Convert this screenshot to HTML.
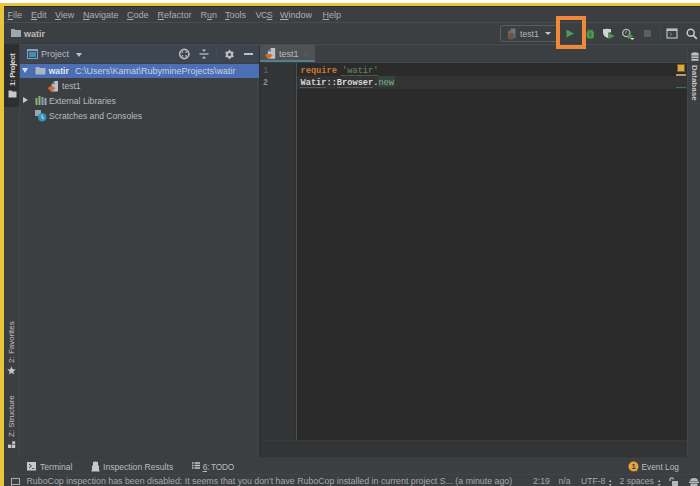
<!DOCTYPE html>
<html><head><meta charset="utf-8">
<style>
*{margin:0;padding:0;box-sizing:border-box}
html,body{width:700px;height:486px;overflow:hidden;background:#fff}
body{position:relative;font-family:"Liberation Sans",sans-serif;color:#bbbbbb}
.a{position:absolute}
.t{position:absolute;white-space:pre;font-size:8.6px;line-height:10px}
.mono{font-family:"Liberation Mono",monospace}
u{text-decoration:underline;text-underline-offset:1px}
</style></head><body>
<!-- yellow frame -->
<div class="a" style="left:0;top:3px;width:700px;height:483px;background:#e9c53c"></div>
<div class="a" style="left:3.5px;top:6px;width:696.5px;height:480px;background:#2e2f2c"></div><div class="a" style="left:4px;top:7px;width:696px;height:479px;background:#3c3f41"></div>

<!-- menu bar -->
<div class="t" style="left:7.5px;top:10px;font-size:9px;color:#adadad"><span style="position:absolute;left:0"><u>F</u>ile</span><span style="position:absolute;left:23.5px"><u>E</u>dit</span><span style="position:absolute;left:47.5px"><u>V</u>iew</span><span style="position:absolute;left:75.5px"><u>N</u>avigate</span><span style="position:absolute;left:119.5px"><u>C</u>ode</span><span style="position:absolute;left:150px"><u>R</u>efactor</span><span style="position:absolute;left:193px">R<u>u</u>n</span><span style="position:absolute;left:217.5px"><u>T</u>ools</span><span style="position:absolute;left:248px;letter-spacing:-0.6px">VC<u>S</u></span><span style="position:absolute;left:272.5px"><u>W</u>indow</span><span style="position:absolute;left:315px"><u>H</u>elp</span></div>
<div class="a" style="left:4px;top:22px;width:696px;height:1px;background:#4a4d4f"></div>

<!-- nav bar -->
<div class="a" style="left:11px;top:30px;width:10px;height:7px;background:#9aa7b0"></div>
<div class="a" style="left:11px;top:29px;width:4px;height:2px;background:#9aa7b0"></div>
<div class="t" style="left:24px;top:28.6px;font-size:9px;font-weight:bold;color:#bbb">watir</div>

<!-- run config combo -->
<div class="a" style="left:500px;top:25px;width:58px;height:17px;border:1px solid #5a5d5f;border-radius:3px"></div>
<svg class="a" style="left:505px;top:28px" width="12" height="12"><path d="M6 0.5 H10.5 V10 H3 V3.5Z" fill="#6f767d"/><path d="M6 0.5 V3.5 H3Z" fill="#4f555b"/><circle cx="6" cy="8" r="3.6" fill="#5a5e62"/><path d="M4 6.5 H8 L9 7.8 L6 11 L3 7.8Z" fill="#8a4a2a"/></svg>
<div class="t" style="left:520px;top:29px;font-size:8.7px;color:#b5b5b5">test1</div>
<div class="a" style="left:544.5px;top:32px;width:0;height:0;border-left:3px solid transparent;border-right:3px solid transparent;border-top:3.5px solid #c8c8c8"></div>


<svg class="a" style="left:566px;top:29px" width="9" height="9"><path d="M0.5 0.5 L8 4.5 L0.5 8.5Z" fill="#499c54"/></svg>

<!-- debug -->
<svg class="a" style="left:586px;top:28px" width="9" height="11"><path d="M2.2 1 L3.2 2.6 M6.3 1 L5.3 2.6" stroke="#4a9a50" stroke-width="1"/><rect x="0.7" y="2.5" width="7.2" height="8" rx="2.6" fill="#4a9a50"/><rect x="3.2" y="4.6" width="2.2" height="4" rx="0.5" fill="#3a6e40"/></svg>
<!-- coverage -->
<svg class="a" style="left:602px;top:28px" width="14" height="12"><path d="M1 1.3 Q5 0.2 9 1.3 V4.6 H6.4 V10.2 Q1 8.5 1 4.5Z" fill="#d2d2d2"/><path d="M6.8 5 L12.5 8 L6.8 11Z" fill="#4a9a50"/></svg>
<!-- profile -->
<svg class="a" style="left:622px;top:28px" width="13" height="13"><circle cx="4.3" cy="5" r="3.6" fill="none" stroke="#b8b8b8" stroke-width="1.3"/><path d="M4.3 2.8 L3.8 5.5" stroke="#b8b8b8" stroke-width="0.9"/><path d="M6 5.5 L11.5 8.2 L6 11Z" fill="#4a9a50"/><path d="M8 10 L12.5 10 L10.2 12Z" fill="#e0e0e0"/></svg>
<!-- stop -->
<div class="a" style="left:644px;top:29.5px;width:7px;height:7.5px;background:#5c5f61"></div>
<div class="a" style="left:660px;top:26px;width:1px;height:14px;background:#45484a"></div>
<!-- terminal -->
<svg class="a" style="left:666px;top:28px" width="12" height="11"><rect x="1" y="1" width="10" height="9" fill="none" stroke="#bdbdbd" stroke-width="1.2"/><rect x="1" y="1" width="10" height="2" fill="#bdbdbd"/><path d="M3.5 4.5 L6 6.2 L3.5 8" fill="none" stroke="#499c54" stroke-width="1"/></svg>
<!-- search -->
<svg class="a" style="left:686px;top:28px" width="12" height="12"><circle cx="4.7" cy="4.7" r="3.5" fill="none" stroke="#c8c8c8" stroke-width="1.5"/><path d="M7.3 7.3 L10.8 10.8" stroke="#c8c8c8" stroke-width="1.8"/></svg>

<div class="a" style="left:4px;top:43px;width:696px;height:1px;background:#383b3d"></div><div class="a" style="left:4px;top:44px;width:696px;height:1px;background:#4a4d4f"></div>

<!-- left stripe -->
<div class="a" style="left:4px;top:45px;width:15px;height:411px;background:#3c3f41"></div>
<div class="a" style="left:4px;top:44px;width:15px;height:63px;background:#2d2f30"></div>
<div class="a" style="left:19px;top:107px;width:1px;height:350px;background:#44474a"></div>

<!-- project header -->
<div class="a" style="left:19.5px;top:45px;width:239px;height:18px;background:#3d4550"></div>
<!-- selected row -->
<div class="a" style="left:19.5px;top:64px;width:239px;height:14px;background:#4b6eb4"></div>

<!-- editor divider -->
<div class="a" style="left:257px;top:78px;width:2px;height:379px;background:#414346"></div><div class="a" style="left:258.5px;top:45px;width:2.5px;height:412px;background:#2f3133"></div>

<!-- tab bar -->
<div class="a" style="left:260px;top:45px;width:427px;height:17px;background:#3c3f41"></div>
<div class="a" style="left:260px;top:45px;width:55px;height:17px;background:#4e5254"></div>
<div class="a" style="left:260px;top:59.5px;width:55px;height:2.5px;background:#55808e"></div>
<div class="a" style="left:315px;top:61.5px;width:372px;height:1.5px;background:#46494b"></div>

<!-- gutter & editor -->
<div class="a" style="left:261px;top:63px;width:36px;height:377px;background:#323436"></div>
<div class="a" style="left:297px;top:63px;width:390px;height:377px;background:#2b2b2b"></div>
<div class="a" style="left:295px;top:63px;width:1px;height:377px;background:#2f3133"></div><div class="a" style="left:296px;top:63px;width:1px;height:377px;background:#4d4f51"></div>
<div class="a" style="left:297px;top:75.5px;width:390px;height:13px;background:#333333"></div>
<div class="a" style="left:261px;top:440px;width:426px;height:17px;background:#323436"></div><div class="a" style="left:261px;top:440px;width:426px;height:1px;background:#37393b"></div>

<!-- right stripe -->
<div class="a" style="left:687px;top:45px;width:13px;height:412px;background:#3c3f41"></div><div class="a" style="left:686.5px;top:45px;width:1.5px;height:412px;background:#434547"></div>

<!-- bottom -->
<div class="a" style="left:4px;top:457px;width:696px;height:1px;background:#393c3e"></div>
<div class="a" style="left:4px;top:473.5px;width:696px;height:1px;background:#414446"></div>


<!-- project header content -->
<svg class="a" style="left:27px;top:49px" width="11" height="10"><rect x="0.5" y="0.5" width="10" height="9" fill="none" stroke="#8fa0ab" stroke-width="1"/><rect x="0.5" y="0.5" width="10" height="1.6" fill="#8fa0ab"/><rect x="2" y="3" width="7" height="5" fill="#3b8fc0"/></svg>
<div class="t" style="left:41px;top:48.5px;font-size:9px;color:#bbb">Project</div>
<div class="a" style="left:75.8px;top:52.8px;width:0;height:0;border-left:3.2px solid transparent;border-right:3.2px solid transparent;border-top:4px solid #c0c0c0"></div>
<svg class="a" style="left:178px;top:48px" width="13" height="12"><circle cx="6.3" cy="6" r="4.6" fill="none" stroke="#bdbdbd" stroke-width="1.6"/><circle cx="4.4" cy="4.1" r="0.9" fill="#bdbdbd"/><circle cx="8.2" cy="4.1" r="0.9" fill="#bdbdbd"/><circle cx="4.4" cy="7.9" r="0.9" fill="#bdbdbd"/><circle cx="8.2" cy="7.9" r="0.9" fill="#bdbdbd"/></svg>
<svg class="a" style="left:199px;top:48px" width="10" height="12"><path d="M0.5 6 H9.5" stroke="#bdbdbd" stroke-width="1.3"/><path d="M3 1.5 H7 L5 4Z M3 10.5 H7 L5 8Z" fill="#bdbdbd"/></svg>
<div class="a" style="left:216px;top:47px;width:1px;height:13px;background:#434b55"></div>
<svg class="a" style="left:223.5px;top:48.5px" width="11" height="11"><path d="M5.50 0.50 L3.80 2.56 L1.17 3.00 L2.10 5.50 L1.17 8.00 L3.80 8.44 L5.50 10.50 L7.20 8.44 L9.83 8.00 L8.90 5.50 L9.83 3.00 L7.20 2.56Z" fill="#bdbdbd"/><circle cx="5.5" cy="5.5" r="1.5" fill="#3d4550"/></svg>
<div class="a" style="left:243.5px;top:53px;width:9.5px;height:1.5px;background:#c0c0c0"></div>

<!-- tree -->
<div class="a" style="left:22.2px;top:68.2px;width:0;height:0;border-left:3.3px solid transparent;border-right:3.3px solid transparent;border-top:5.5px solid #d8dde6"></div>
<svg class="a" style="left:35px;top:66px" width="11" height="9"><path d="M0.5 1 H4 L5 2 H10.5 V8.5 H0.5Z" fill="#a9b5c5"/></svg>
<div class="t" style="left:48.7px;top:66px;font-weight:bold;color:#e6e9ef">watir</div>
<div class="t" style="left:75px;top:65.7px;font-size:9px;color:#c7d3e8">C:\Users\Kamat\RubymineProjects\watir</div>

<svg class="a" style="left:47px;top:80px" width="12" height="13"><path d="M7.5 1 H11 V11.5 H4.5 V4.5Z" fill="#b9c1c9"/><path d="M7.5 1 V4.5 H4.5Z" fill="#6f7780"/><path d="M2.4 6.6 H6.8 L8.3 8.3 L4.6 11.9 L0.9 8.3Z" fill="#d4692c"/></svg>
<div class="t" style="left:62px;top:81px;color:#bbb">test1</div>

<div class="a" style="left:23px;top:97px;width:0;height:0;border-top:3.3px solid transparent;border-bottom:3.3px solid transparent;border-left:5.5px solid #c8c8c8"></div>
<svg class="a" style="left:35px;top:95px" width="12" height="10"><rect x="0.5" y="3" width="2" height="7" fill="#8fb07a"/><rect x="3.5" y="1" width="2" height="9" fill="#8fb07a"/><rect x="6.5" y="2" width="2" height="8" fill="#7aa0c0"/><rect x="9.5" y="3" width="2" height="7" fill="#9aa7b0"/></svg>
<div class="t" style="left:49px;top:96px;color:#bbb">External Libraries</div>

<svg class="a" style="left:34px;top:109px" width="13" height="13"><path d="M1 1 H7 V7 H1Z" fill="#9aa7b0"/><circle cx="8.2" cy="8.2" r="4.2" fill="#3592c4"/><path d="M8 5.8 V8.6 L9.8 9.8" stroke="#dff" stroke-width="0.9" fill="none"/></svg>
<div class="t" style="left:49px;top:111px;color:#bbb">Scratches and Consoles</div>

<!-- left stripe labels -->
<div class="t" style="left:7.8px;top:86px;font-size:7.9px;font-weight:bold;letter-spacing:-0.35px;color:#d4d4d4;transform-origin:0 0;transform:rotate(-90deg)">1: Project</div>
<svg class="a" style="left:7.5px;top:89.5px" width="9" height="8"><path d="M0.5 0.5 H3.5 L4.5 1.5 H8.5 V7.5 H0.5Z" fill="#c8c8c8"/></svg>
<div class="t" style="left:7px;top:363px;font-size:8px;color:#c0c0c0;transform-origin:0 0;transform:rotate(-90deg)">2: Favorites</div>
<svg class="a" style="left:7px;top:366px" width="9" height="9"><path d="M4.5 0.3 L5.6 3.3 L8.8 3.4 L6.3 5.4 L7.2 8.6 L4.5 6.8 L1.8 8.6 L2.7 5.4 L0.2 3.4 L3.4 3.3Z" fill="#c8c8c8"/></svg>
<div class="t" style="left:7px;top:437px;font-size:8px;color:#c0c0c0;transform-origin:0 0;transform:rotate(-90deg)">Z: Structure</div>
<svg class="a" style="left:8px;top:441px" width="8" height="8"><rect x="4.2" y="0.3" width="3" height="2.6" fill="#c8c8c8"/><rect x="0" y="3.6" width="3.4" height="3.4" fill="#c8c8c8"/><rect x="4" y="3.6" width="3.2" height="3.4" fill="#c8c8c8"/></svg>

<!-- tab content -->
<svg class="a" style="left:264px;top:47px" width="12" height="13"><path d="M7 1 H11.2 V11.8 H3.8 V4.6Z" fill="#b9c1c9"/><path d="M7 1 V4.6 H3.8Z" fill="#6f7780"/><path d="M2.6 6.9 H7 L8.5 8.6 L4.8 12.2 L1.1 8.6Z" fill="#d4692c"/></svg>
<div class="t" style="left:279px;top:48.5px;font-size:9px;color:#bbb">test1</div>
<svg class="a" style="left:303px;top:50px" width="7" height="7"><path d="M0.5 0.5 L6.5 6.5 M6.5 0.5 L0.5 6.5" stroke="#5a5d5f" stroke-width="1"/></svg>

<!-- code -->
<div class="t mono" style="left:263.3px;top:65.8px;font-size:8.4px;color:#55585a;font-weight:bold">1</div>
<div class="t mono" style="left:263px;top:77.8px;font-size:8.4px;color:#8e8e8e;font-weight:bold">2</div>
<div class="t mono" style="left:300.5px;top:65.8px;font-size:8.67px;color:#cc7832;font-weight:bold">require <span style="color:#6a8759;font-weight:normal">'watir'</span></div>
<div class="a" style="left:378px;top:76px;width:17px;height:10.5px;background:#33463a"></div>
<div class="t mono" style="left:300.5px;top:77.8px;font-size:8.67px;color:#d8d8d8;font-weight:bold">Watir::Browser.<span style="color:#8aa597;font-weight:normal">new</span></div>
<svg class="a" style="left:341px;top:73.5px" width="38" height="3"><path d="M0 2 L1 1 L2 2 L3 1 L4 2 L5 1 L6 2 L7 1 L8 2 L9 1 L10 2 L11 1 L12 2 L13 1 L14 2 L15 1 L16 2 L17 1 L18 2 L19 1 L20 2 L21 1 L22 2 L23 1 L24 2 L25 1 L26 2 L27 1 L28 2 L29 1 L30 2 L31 1 L32 2 L33 1 L34 2 L35 1 L36 2 L37 1" stroke="#8a8a80" stroke-width="0.7" stroke-dasharray="1 0.6" fill="none"/></svg>
<svg class="a" style="left:300px;top:86px" width="27" height="3"><path d="M0 2 L1 1 L2 2 L3 1 L4 2 L5 1 L6 2 L7 1 L8 2 L9 1 L10 2 L11 1 L12 2 L13 1 L14 2 L15 1 L16 2 L17 1 L18 2 L19 1 L20 2 L21 1 L22 2 L23 1 L24 2 L25 1 L26 2" stroke="#8a8a8a" stroke-width="0.7" stroke-dasharray="1 0.6" fill="none"/></svg>
<svg class="a" style="left:337px;top:86px" width="37" height="3"><path d="M0 2 L1 1 L2 2 L3 1 L4 2 L5 1 L6 2 L7 1 L8 2 L9 1 L10 2 L11 1 L12 2 L13 1 L14 2 L15 1 L16 2 L17 1 L18 2 L19 1 L20 2 L21 1 L22 2 L23 1 L24 2 L25 1 L26 2 L27 1 L28 2 L29 1 L30 2 L31 1 L32 2 L33 1 L34 2 L35 1 L36 2" stroke="#8a8a8a" stroke-width="0.7" stroke-dasharray="1 0.6" fill="none"/></svg>

<!-- right markers -->
<div class="a" style="left:677px;top:64px;width:8px;height:8px;background:#d8aa3c;border:1px solid #7a6028"></div>
<div class="a" style="left:676px;top:74px;width:10px;height:2px;background:#b39a6e"></div>
<div class="a" style="left:676px;top:87px;width:10px;height:1.2px;background:#3a7a3a"></div>

<!-- right stripe -->
<svg class="a" style="left:691px;top:52px" width="8" height="10"><ellipse cx="4" cy="1.8" rx="3.6" ry="1.5" fill="#c0c0c0"/><rect x="0.4" y="1.8" width="7.2" height="7" fill="#c0c0c0"/><path d="M0.4 4 H7.6 M0.4 6.5 H7.6" stroke="#3c3f41" stroke-width="0.8"/></svg>
<div class="t" style="left:699px;top:64.5px;font-size:8px;font-weight:bold;letter-spacing:0px;color:#c4c4c4;transform-origin:0 0;transform:rotate(90deg)">Database</div>

<!-- bottom tool buttons -->
<svg class="a" style="left:27px;top:462px" width="10" height="9"><rect x="0" y="0" width="9" height="8.5" fill="#c8c8c8"/><path d="M2 2 L4.5 4 L2 6" stroke="#3c3f41" stroke-width="1" fill="none"/><path d="M5 6.5 H7.5" stroke="#3c3f41" stroke-width="0.8"/></svg>
<div class="t" style="left:40px;top:461.5px;color:#bbb">Terminal</div>
<svg class="a" style="left:90.5px;top:461px" width="9" height="11"><path d="M2 1 Q4.5 0 7 1 L7 4 L8 5 L8 9 L1 9 L1 5 L2 4Z" fill="#c8c8c8"/><rect x="0.5" y="9" width="8" height="1.5" fill="#c8c8c8"/></svg>
<div class="t" style="left:103px;top:461.5px;color:#bbb">Inspection Results</div>
<svg class="a" style="left:191.5px;top:462px" width="8" height="8"><path d="M0 1 H1.5 M0 3.5 H1.5 M0 6 H1.5 M2.5 1 H8 M2.5 3.5 H8 M2.5 6 H8" stroke="#c8c8c8" stroke-width="1.3"/></svg>
<div class="t" style="left:202.7px;top:461.5px;color:#bbb;font-size:8.3px;letter-spacing:-0.25px"><u>6</u>: TODO</div>
<svg class="a" style="left:628px;top:461px" width="11" height="11"><circle cx="5.5" cy="5.5" r="5" fill="#e6a33a"/><path d="M5.5 9 L9.5 10.5 L8 7Z" fill="#e6a33a"/><text x="5.5" y="8.3" font-size="7.5" font-family="Liberation Sans" font-weight="bold" text-anchor="middle" fill="#3c3f41">1</text></svg>
<div class="t" style="left:641.5px;top:461.5px;color:#bbb;font-size:8.3px">Event Log</div>

<!-- status bar -->
<svg class="a" style="left:10px;top:477px" width="11" height="9"><rect x="1.5" y="1.5" width="8" height="6" fill="none" stroke="#a8a8a8" stroke-width="1.1"/><path d="M1.5 7.5 V9" stroke="#a8a8a8"/></svg>
<div class="t" style="left:26.5px;top:476.4px;font-size:8.82px;color:#a8a8a8">RuboCop inspection has been disabled: It seems that you don't have RuboCop installed in current project S... (a minute ago)</div>
<div class="t" style="left:533px;top:476.4px;color:#a8a8a8">2:19</div>
<div class="t" style="left:558.5px;top:476.4px;color:#a8a8a8">n/a</div>
<div class="t" style="left:581px;top:476.4px;color:#a8a8a8">UTF-8</div><svg class="a" style="left:607.5px;top:479px" width="5" height="8"><path d="M0.7 3 L2.2 0.8 L3.7 3Z M0.7 5 L2.2 7.2 L3.7 5Z" fill="#a8a8a8"/></svg>
<div class="t" style="left:619.5px;top:476.4px;color:#a8a8a8">2 spaces</div><svg class="a" style="left:656.5px;top:479px" width="5" height="8"><path d="M0.7 3 L2.2 0.8 L3.7 3Z M0.7 5 L2.2 7.2 L3.7 5Z" fill="#a8a8a8"/></svg>
<svg class="a" style="left:668px;top:477px" width="11" height="9"><path d="M2 4 V2.5 Q2 0.8 3.8 0.8 Q5.5 0.8 5.5 2.5" fill="none" stroke="#b8b8b8" stroke-width="1.2"/><rect x="4" y="4" width="6" height="5" fill="#b8b8b8"/></svg>
<svg class="a" style="left:687.5px;top:477px" width="12" height="9"><path d="M2 4 Q2 1 6 1 Q10 1 10 4Z" fill="#b8b8b8"/><rect x="1" y="4.5" width="10" height="1.5" fill="#b8b8b8"/><rect x="2.5" y="6.5" width="7" height="3" fill="#b8b8b8"/></svg>

<!-- orange highlight -->
<div class="a" style="left:556px;top:16px;width:30px;height:33px;border:4.5px solid #f0883a"></div>
</body></html>
